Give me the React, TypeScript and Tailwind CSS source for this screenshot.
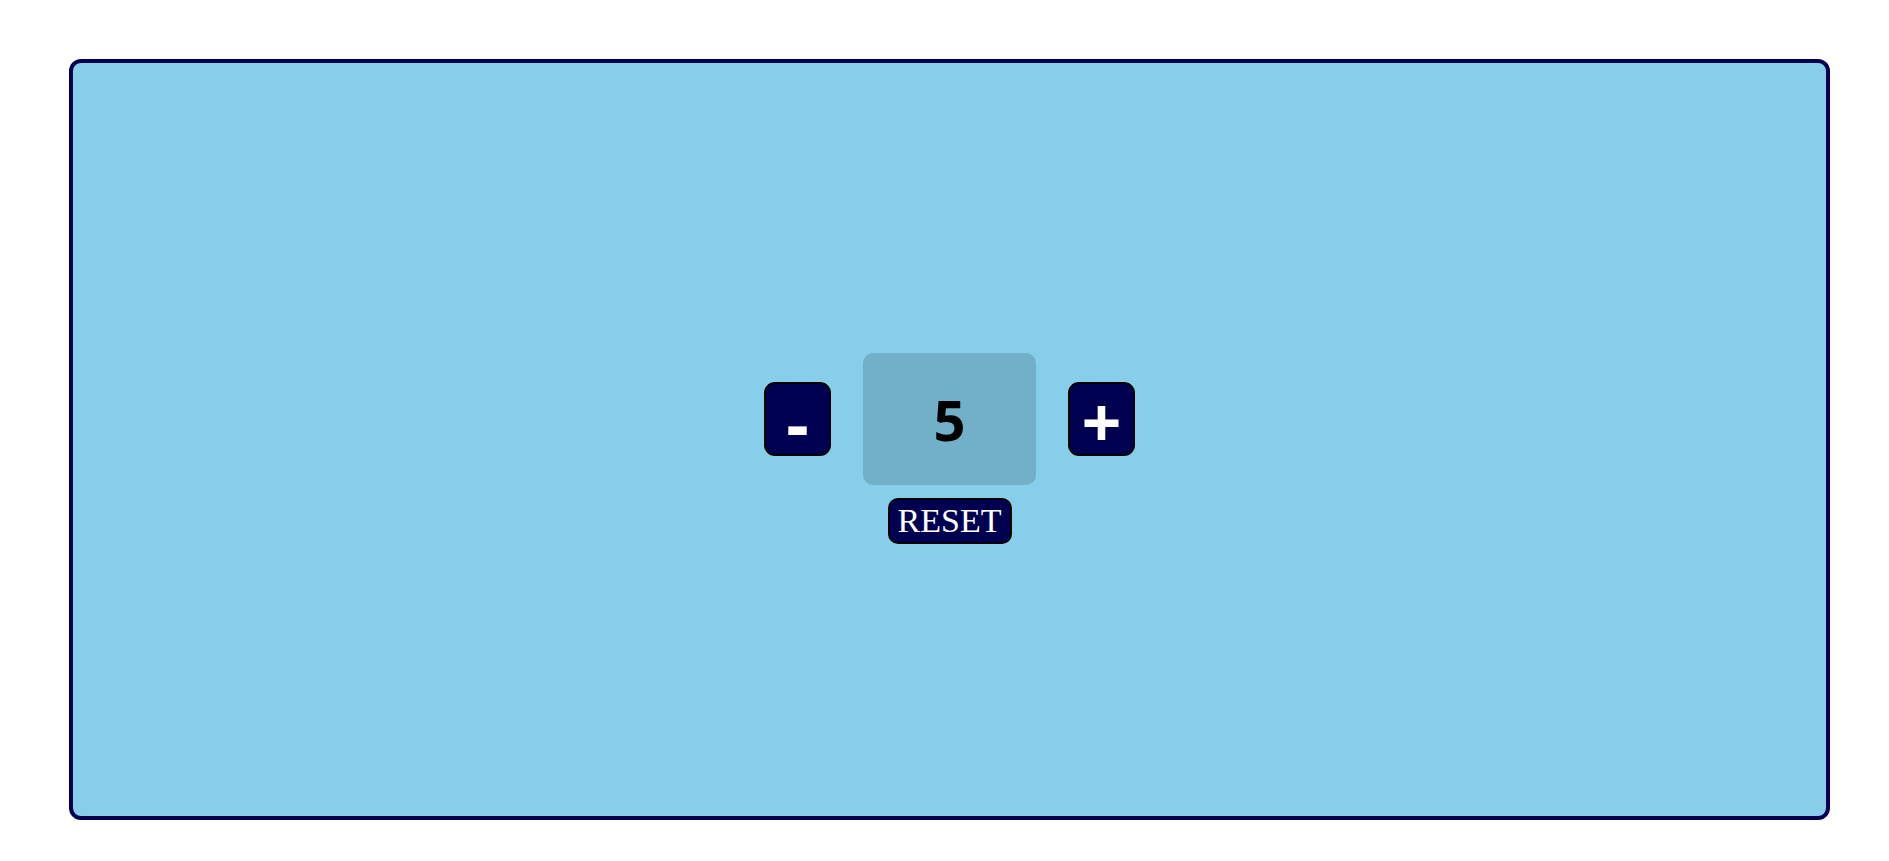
import { useState } from "react";

export default function App() {
  const [count, setCount] = useState(5);

  return (
    <div className="min-h-screen bg-white pl-[69px] pt-[59px]">
      <div className="flex h-[761px] w-[1761px] flex-col items-center justify-center rounded-[12px] border-4 border-[#000050] bg-[#87ceeb] pt-[17px]">
        <div className="flex items-center gap-8">
          <button
            onClick={() => setCount((c) => c - 1)}
            className="flex h-[74px] w-[67px] items-center justify-center rounded-[11px] border-2 border-black bg-[#000050] pt-[8px] font-['Open_Sans',sans-serif] text-[70px] font-bold leading-none text-white"
          >
            -
          </button>
          <div className="flex h-[132px] w-[173px] items-center justify-center rounded-[10px] bg-black/15 font-['Open_Sans',sans-serif] text-[56px] font-bold text-black">
            {count}
          </div>
          <button
            onClick={() => setCount((c) => c + 1)}
            className="flex h-[74px] w-[67px] items-center justify-center rounded-[11px] border-2 border-black bg-[#000050] pt-[5px] font-['Open_Sans',sans-serif] text-[70px] font-bold leading-none text-white"
          >
            +
          </button>
        </div>
        <button
          onClick={() => setCount(0)}
          className="mt-[13px] flex h-[46px] w-[124px] items-center justify-center rounded-[10px] border-2 border-black bg-[#000050] font-['Liberation_Serif',serif] text-[34px] leading-none text-white"
        >
          RESET
        </button>
      </div>
    </div>
  );
}
